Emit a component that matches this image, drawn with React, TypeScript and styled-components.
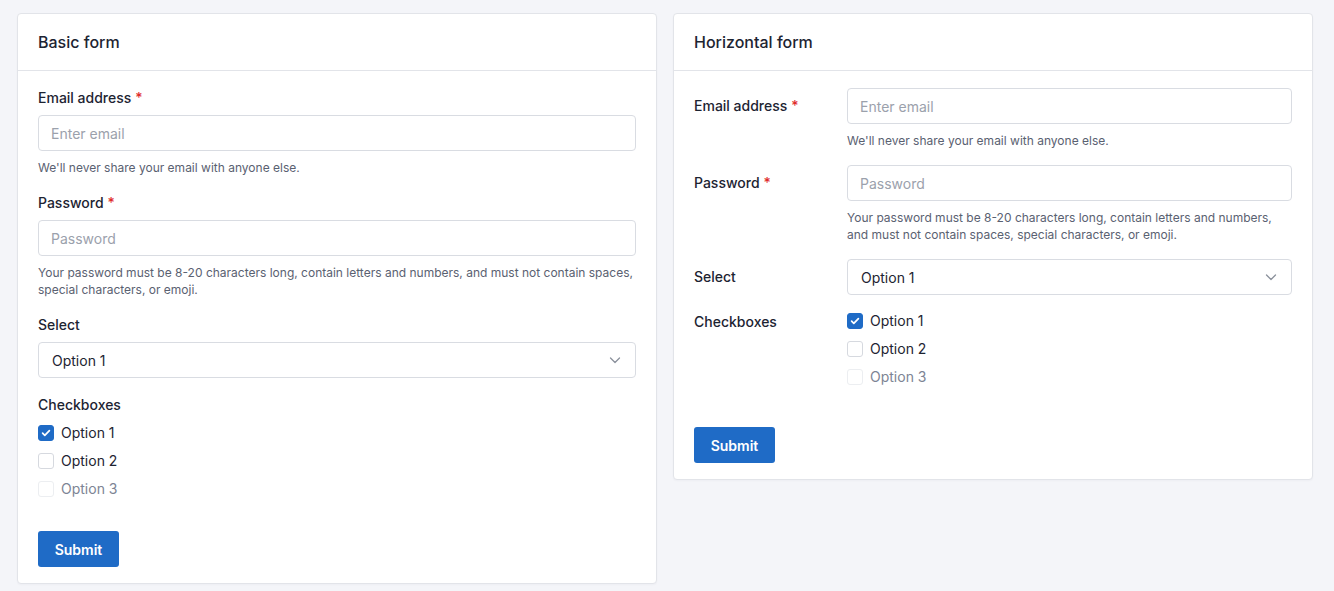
import React from "react";
import styled, { createGlobalStyle } from "styled-components";

const Global = createGlobalStyle`
  html, body { margin: 0; padding: 0; background: #f4f5f9; }
  body { font-family: Inter, "Noto Sans", sans-serif; color: #1d2432; -webkit-font-smoothing: antialiased; }
  * { box-sizing: border-box; }
`;

const Page = styled.div`
  display: grid;
  grid-template-columns: 640px 640px;
  gap: 16px;
  align-items: start;
  padding: 13px 17px;
`;

const Card = styled.div`
  background: #fff;
  border: 1px solid #e2e4e9;
  border-radius: 4px;
  box-shadow: 0 1px 2px rgba(20, 30, 50, 0.03);
`;

const CardHeader = styled.div`
  height: 57px;
  display: flex;
  align-items: center;
  padding: 0 20px;
  border-bottom: 1px solid #e2e4e9;
  font-size: 16px;
  font-weight: 500;
  color: #1d2432;
`;

const CardBody = styled.div<{ $top?: number }>`
  padding: ${(p) => p.$top ?? 16}px 20px 16px;
`;

const Group = styled.div<{ $mb?: number }>`
  margin-bottom: ${(p) => (p.$mb ?? 16)}px;
`;

const Label = styled.label`
  display: block;
  font-size: 14px;
  line-height: 21px;
  font-weight: 500;
  color: #1d2432;
  margin-bottom: 7px;
`;

const HLabel = styled.label<{ $top?: number }>`
  display: block;
  font-size: 14px;
  line-height: 21px;
  font-weight: 500;
  color: #1d2432;
  padding-top: ${(p) => p.$top ?? 0}px;
`;

const Req = styled.span`
  color: #e02c2c;
  margin-left: 4px;
`;

const Input = styled.input`
  display: block;
  width: 100%;
  height: 36px;
  border: 1px solid #d9dce2;
  border-radius: 4px;
  padding: 0 12px;
  font-family: inherit;
  font-size: 14px;
  color: #1d2432;
  background: #fff;
  outline: none;
  &::placeholder { color: #9ba1ac; }
`;

const SelectBox = styled.div`
  display: flex;
  align-items: center;
  justify-content: space-between;
  height: 36px;
  border: 1px solid #d9dce2;
  border-radius: 4px;
  padding: 0 14px 0 13px;
  font-size: 14px;
  color: #1d2432;
  background: #fff;
`;

const Help = styled.div`
  margin-top: 8px;
  font-size: 12px;
  line-height: 17px;
  color: #5a6171;
`;

const CheckList = styled.div<{ $mt?: number }>`
  display: flex;
  flex-direction: column;
  gap: 7px;
  margin-top: ${(p) => p.$mt ?? 0}px;
`;

const CheckRow = styled.div<{ $disabled?: boolean }>`
  display: flex;
  align-items: center;
  gap: 7px;
  height: 21px;
  font-size: 14px;
  color: ${(p) => (p.$disabled ? "#7d8494" : "#1d2432")};
`;

const Box = styled.span<{ $checked?: boolean; $disabled?: boolean }>`
  width: 16px;
  height: 16px;
  border-radius: 3px;
  display: inline-flex;
  align-items: center;
  justify-content: center;
  background: ${(p) => (p.$checked ? "#1f6bc6" : "#fff")};
  border: 1px solid
    ${(p) => (p.$checked ? "#1f6bc6" : p.$disabled ? "#eceef1" : "#d6d9df")};
`;

const Button = styled.button<{ $mt: number }>`
  margin-top: ${(p) => p.$mt}px;
  height: 36px;
  width: 81px;
  padding: 0;
  border: none;
  border-radius: 3px;
  background: #1f6bc6;
  color: #fff;
  font-family: inherit;
  font-size: 14px;
  font-weight: 600;
  display: block;
`;

const HRow = styled.div<{ $mb?: number }>`
  display: grid;
  grid-template-columns: 141px 1fr;
  column-gap: 12px;
  margin-bottom: ${(p) => p.$mb ?? 16}px;
`;

const Chevron = () => (
  <svg width="12" height="12" viewBox="0 0 12 12" fill="none">
    <path d="M1.5 4l4.5 4.5L10.5 4" stroke="#8b919c" strokeWidth="1.3" strokeLinecap="round" strokeLinejoin="round" />
  </svg>
);

const Check = () => (
  <svg width="10" height="10" viewBox="0 0 10 10" fill="none">
    <path d="M1.6 5.2l2.2 2.2L8.4 2.6" stroke="#fff" strokeWidth="1.7" strokeLinecap="round" strokeLinejoin="round" />
  </svg>
);

const Checks = ({ mt }: { mt?: number }) => (
  <CheckList $mt={mt}>
    <CheckRow>
      <Box $checked>
        <Check />
      </Box>
      Option 1
    </CheckRow>
    <CheckRow>
      <Box />
      Option 2
    </CheckRow>
    <CheckRow $disabled>
      <Box $disabled />
      Option 3
    </CheckRow>
  </CheckList>
);

const pwHelpLong =
  "Your password must be 8-20 characters long, contain letters and numbers, and must not contain spaces, special characters, or emoji.";

export default function App() {
  return (
    <>
      <Global />
      <Page>
        <Card>
          <CardHeader>Basic form</CardHeader>
          <CardBody>
            <Group>
              <Label>
                Email address<Req>*</Req>
              </Label>
              <Input placeholder="Enter email" />
              <Help>We'll never share your email with anyone else.</Help>
            </Group>
            <Group>
              <Label>
                Password<Req>*</Req>
              </Label>
              <Input placeholder="Password" />
              <Help>{pwHelpLong}</Help>
            </Group>
            <Group>
              <Label>Select</Label>
              <SelectBox>
                <span>Option 1</span>
                <Chevron />
              </SelectBox>
            </Group>
            <Group $mb={0}>
              <HLabel>Checkboxes</HLabel>
              <Checks mt={7} />
            </Group>
            <Button $mt={32}>Submit</Button>
          </CardBody>
        </Card>
        <Card>
          <CardHeader>Horizontal form</CardHeader>
          <CardBody $top={17}>
            <HRow>
              <HLabel $top={7}>
                Email address<Req>*</Req>
              </HLabel>
              <div>
                <Input placeholder="Enter email" />
                <Help>We'll never share your email with anyone else.</Help>
              </div>
            </HRow>
            <HRow>
              <HLabel $top={7}>
                Password<Req>*</Req>
              </HLabel>
              <div>
                <Input placeholder="Password" />
                <Help>
                  Your password must be 8-20 characters long, contain letters and numbers,
                  <br />
                  and must not contain spaces, special characters, or emoji.
                </Help>
              </div>
            </HRow>
            <HRow>
              <HLabel $top={7}>Select</HLabel>
              <SelectBox>
                <span>Option 1</span>
                <Chevron />
              </SelectBox>
            </HRow>
            <HRow $mb={0}>
              <HLabel $top={0}>Checkboxes</HLabel>
              <Checks mt={-1} />
            </HRow>
            <Button $mt={40}>Submit</Button>
          </CardBody>
        </Card>
      </Page>
    </>
  );
}
